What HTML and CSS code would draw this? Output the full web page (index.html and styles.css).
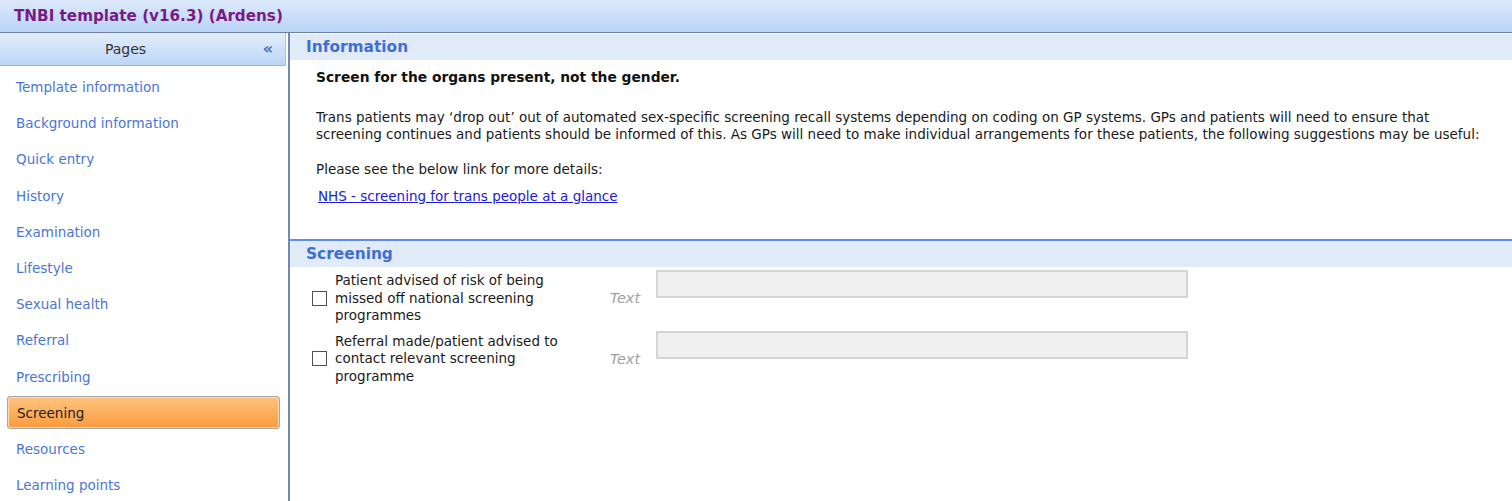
FILE: index.html
```html
<!DOCTYPE html>
<html lang="en">
<head>
<meta charset="utf-8">
<title>TNBI template (v16.3) (Ardens)</title>
<link rel="stylesheet" href="styles.css">
</head>
<body>
<header class="titlebar">TNBI template (v16.3) (Ardens)</header>
<div class="main">
  <aside class="sidebar">
    <div class="sidebar-head">
      <span class="sidebar-title">Pages</span>
      <span class="collapse">&laquo;</span>
    </div>
    <nav class="nav">
      <div class="nav-item">Template information</div>
      <div class="nav-item">Background information</div>
      <div class="nav-item">Quick entry</div>
      <div class="nav-item">History</div>
      <div class="nav-item">Examination</div>
      <div class="nav-item">Lifestyle</div>
      <div class="nav-item">Sexual health</div>
      <div class="nav-item">Referral</div>
      <div class="nav-item">Prescribing</div>
      <div class="nav-item active"><span class="pill">Screening</span></div>
      <div class="nav-item">Resources</div>
      <div class="nav-item">Learning points</div>
    </nav>
  </aside>
  <main class="content">
    <section class="section info">
      <h2 class="section-head">Information</h2>
      <div class="info-body">
        <p class="lead">Screen for the organs present, not the gender.</p>
        <p class="para">Trans patients may ‘drop out’ out of automated sex-specific screening recall systems depending on coding on GP systems. GPs and patients will need to ensure that screening continues and patients should be informed of this. As GPs will need to make individual arrangements for these patients, the following suggestions may be useful:</p>
        <p class="para">Please see the below link for more details:</p>
        <a class="link" href="#">NHS - screening for trans people at a glance</a>
      </div>
    </section>
    <section class="section screening">
      <h2 class="section-head">Screening</h2>
      <div class="rows">
        <div class="row">
          <span class="check"></span>
          <span class="label">Patient advised of risk of being missed off national screening programmes</span>
          <span class="hint">Text</span>
          <span class="field"></span>
        </div>
        <div class="row">
          <span class="check"></span>
          <span class="label">Referral made/patient advised to contact relevant screening programme</span>
          <span class="hint">Text</span>
          <span class="field"></span>
        </div>
      </div>
    </section>
  </main>
</div>
</body>
</html>
```
FILE: styles.css
```css
* { box-sizing: border-box; }
html, body { margin: 0; padding: 0; }
body {
  width: 1512px;
  height: 501px;
  overflow: hidden;
  background: #ffffff;
  font-family: "DejaVu Sans", Verdana, sans-serif;
  font-size: 13.5px;
  color: #1a1a1a;
}
.titlebar {
  height: 33px;
  padding-left: 14px;
  display: flex;
  align-items: center;
  font-weight: bold;
  font-size: 15.2px;
  color: #7a1a86;
  background: linear-gradient(#dde9fb, #b9d4f6);
  border-bottom: 1px solid #6b80a6;
}
.main {
  display: flex;
  height: 468px;
}
.sidebar {
  width: 288px;
  flex: none;
  background: #ffffff;
}
.sidebar-head {
  height: 33px;
  display: flex;
  align-items: center;
  position: relative;
  padding-right: 34px;
  background: linear-gradient(#e3edfb, #bcd6f7);
  border-bottom: 1px solid #8fb2e6;
  border-right: 1px solid #a9c4ea;
  margin-right: 2px;
}
.sidebar-title {
  flex: 1;
  text-align: center;
  font-size: 14px;
  color: #333333;
}
.collapse {
  position: absolute;
  right: 12px;
  top: 6px;
  font-size: 16px;
  font-weight: bold;
  color: #4a6fb8;
}
.nav {
  padding-top: 3px;
}
.nav-item {
  height: 36.2px;
  display: flex;
  align-items: center;
  padding-left: 16px;
  font-size: 13.5px;
  color: #4a76d9;
}
.nav-item.active {
  padding: 2px 8px 2px 7px;
}
.pill {
  flex: 1;
  height: 33px;
  display: flex;
  align-items: center;
  padding-left: 9px;
  color: #222222;
  border: 1px solid #a7a7a7;
  border-radius: 3px;
  box-shadow: inset 0 0 0 1px #fddcb3;
  background: linear-gradient(#fec47e, #fb9a3f);
}
.content {
  flex: 1;
  border-left: 2px solid #7489ae;
  display: flex;
  flex-direction: column;
}
.section-head {
  margin: 0;
  height: 26px;
  display: flex;
  align-items: center;
  padding-left: 16px;
  font-size: 15.4px;
  font-weight: bold;
  color: #3f6fd6;
  background: #e1eaf7;
}
.info .section-head { margin-top: 1px; }
.info-body {
  padding: 9px 0 0 26px;
  height: 179px;
}
.lead {
  margin: 0;
  font-weight: bold;
  font-size: 13.8px;
  color: #111111;
  line-height: 17px;
}
.para {
  margin: 23px 0 0;
  line-height: 17px;
  padding-right: 22px;
}
.para + .para { margin-top: 18px; }
.link {
  display: inline-block;
  margin-top: 10px;
  margin-left: 2px;
  color: #1a1ae0;
  text-decoration: underline;
}
.screening {
  border-top: 2px solid #5f8fe8;
}
.rows {
  padding: 5px 0 0 22px;
  display: flex;
  flex-direction: column;
  gap: 8px;
}
.row {
  display: flex;
  align-items: center;
}
.check {
  width: 15px;
  height: 15px;
  border: 1px solid #505050;
  background: #ffffff;
  flex: none;
}
.label {
  width: 232px;
  margin-left: 8px;
  line-height: 17.5px;
  color: #1a1a1a;
}
.hint {
  margin-left: 43px;
  width: 46px;
  font-style: italic;
  color: #a0a0a0;
  font-size: 14.4px;
}
.field {
  width: 532px;
  height: 28px;
  align-self: flex-start;
  margin-top: -2px;
  background: #f0f0f0;
  border: 2px solid #d4d4d4;
}
```
